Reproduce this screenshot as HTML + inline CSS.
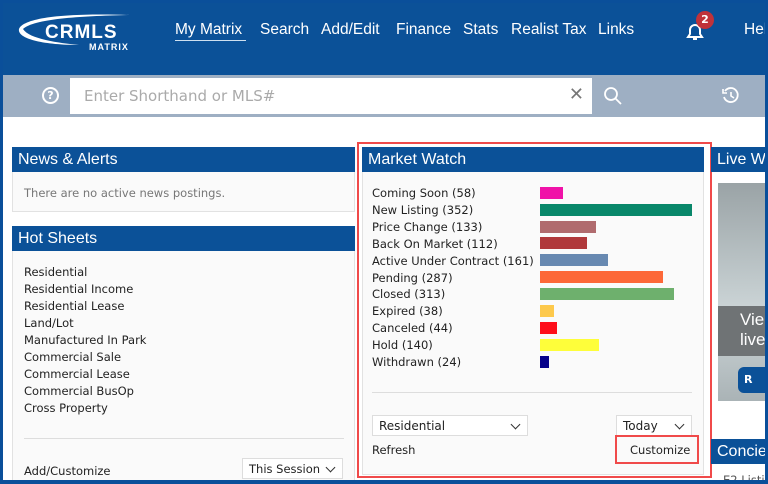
<!DOCTYPE html>
<html><head><style>
*{margin:0;padding:0;box-sizing:border-box}
body{width:768px;height:484px;overflow:hidden;background:#0a4f9a;position:relative;font-family:"DejaVu Sans",Verdana,sans-serif}
.frame{position:absolute;left:3px;top:3px;right:3px;bottom:4px;background:#fff;overflow:hidden}
.hdr{position:absolute;left:0;top:0;width:765px;height:72px;background:#0b5198}
.nav{position:absolute;top:18px;font-family:"Liberation Sans",sans-serif;font-size:15.5px;color:#fff}
.sb{position:absolute;left:0;top:72px;width:765px;height:42px;background:#9eafc3}
.inp{position:absolute;left:67px;top:3px;width:522px;height:36px;background:#fff;font-family:"DejaVu Sans",sans-serif;font-size:15px;color:#aaa;padding:9px 14px}
.ph{position:absolute;background:#0b5198;color:#fff;font-family:"Liberation Sans",sans-serif;font-size:16px;height:25px;line-height:25px;padding-left:6px}
.pb{position:absolute;background:#fafafa;border:1px solid #e2e2e2;border-top:none}
.t{font-size:11.5px;color:#222;position:absolute;white-space:nowrap}
.bar{position:absolute;height:12px;left:537px}
.sel{position:absolute;background:#fff;border:1px solid #ddd;font-size:12px;color:#222;padding:3px 6px;height:21px}
.sel:after{content:"";position:absolute;right:8px;top:5px;width:6px;height:6px;border-right:1.5px solid #333;border-bottom:1.5px solid #333;transform:rotate(45deg)}
</style></head><body>
<div class="frame">
<div class="hdr">
<svg style="position:absolute;left:6px;top:8px" width="135" height="40" viewBox="0 0 135 40">
<path d="M10 18 C15 6 60 2 120 4 C70 5 25 8 14 18 C20 28 50 32 70 34 C35 34 8 28 10 18Z" fill="#fff"/>
<text x="36" y="27" font-family="Liberation Sans" font-weight="bold" font-size="19" fill="#fff" letter-spacing="1">CRMLS</text>
<text x="80" y="39" font-family="Liberation Sans" font-weight="bold" font-size="9" fill="#fff" letter-spacing="1">MATRIX</text>
</svg>
<div class="nav" style="left:172px">My Matrix</div>
<div style="position:absolute;left:172px;top:37px;width:71px;height:1px;background:#cfe0f0"></div>
<div class="nav" style="left:257px">Search</div>
<div class="nav" style="left:318px">Add/Edit</div>
<div class="nav" style="left:393px">Finance</div>
<div class="nav" style="left:460px">Stats</div>
<div class="nav" style="left:508px">Realist Tax</div>
<div class="nav" style="left:595px">Links</div>
<svg style="position:absolute;left:681px;top:18px" width="22" height="22" viewBox="0 0 22 22"><path d="M4 16 L6 13 V9 A5 5 0 0 1 16 9 V13 L18 16 Z M9 18 h4" fill="none" stroke="#fff" stroke-width="2"/></svg>
<div style="position:absolute;left:693px;top:8px;width:18px;height:18px;border-radius:50%;background:#c0323a;color:#fff;font-size:11px;font-weight:bold;text-align:center;line-height:18px">2</div>
<div class="nav" style="left:741px">Hel</div>
</div>
<div class="sb">
<div style="position:absolute;left:39px;top:12px;width:17px;height:17px;border:2px solid #fff;border-radius:50%;color:#fff;font-size:11px;font-weight:bold;text-align:center;line-height:13px">?</div>
<div class="inp">Enter Shorthand or MLS#<span style="position:absolute;right:8px;top:6px;color:#777;font-size:18px">✕</span></div>
<svg style="position:absolute;left:600px;top:11px" width="20" height="20"><circle cx="8" cy="8" r="6" fill="none" stroke="#fff" stroke-width="1.8"/><path d="M12.5 12.5 L18 18" stroke="#fff" stroke-width="1.8"/></svg>
<svg style="position:absolute;left:718px;top:11px" width="20" height="20"><path d="M4 5 A7 7 0 1 1 3 11" fill="none" stroke="#fff" stroke-width="1.8"/><path d="M2 3 V7 H6" fill="none" stroke="#fff" stroke-width="1.6"/><path d="M10 6 V10 L13 12" fill="none" stroke="#fff" stroke-width="1.6"/></svg>
</div>

<div class="ph" style="left:9px;top:144px;width:343px">News &amp; Alerts</div>
<div class="pb" style="left:9px;top:169px;width:343px;height:40px"><div class="t" style="left:11px;top:14px;color:#777">There are no active news postings.</div></div>
<div class="ph" style="left:9px;top:223px;width:343px">Hot Sheets</div>
<div class="pb" style="left:9px;top:248px;width:343px;height:240px">
<div class="t" style="left:11px;top:13px;line-height:17px">Residential<br>Residential Income<br>Residential Lease<br>Land/Lot<br>Manufactured In Park<br>Commercial Sale<br>Commercial Lease<br>Commercial BusOp<br>Cross Property</div>
<div style="position:absolute;left:11px;top:187px;width:320px;height:1px;background:#ddd"></div>
<div class="t" style="left:11px;top:213px">Add/Customize</div>
<div class="sel" style="left:229px;top:207px;width:101px;font-size:11.5px">This Session</div>
</div>

<div class="ph" style="left:359px;top:144px;width:342px">Market Watch</div>
<div class="pb" style="left:359px;top:169px;width:342px;height:303px"></div>
<div class="t" style="left:369px;top:182px;line-height:16.9px">Coming Soon (58)<br>New Listing (352)<br>Price Change (133)<br>Back On Market (112)<br>Active Under Contract (161)<br>Pending (287)<br>Closed (313)<br>Expired (38)<br>Canceled (44)<br>Hold (140)<br>Withdrawn (24)</div>
<div class="bar" style="top:184px;width:23px;background:#f012a8"></div>
<div class="bar" style="top:201px;width:152px;background:#09876a"></div>
<div class="bar" style="top:218px;width:56px;background:#b06b6e"></div>
<div class="bar" style="top:234px;width:47px;background:#b0383b"></div>
<div class="bar" style="top:251px;width:68px;background:#6889b1"></div>
<div class="bar" style="top:268px;width:123px;background:#fd6838"></div>
<div class="bar" style="top:285px;width:134px;background:#6eb06d"></div>
<div class="bar" style="top:302px;width:14px;background:#fdc94c"></div>
<div class="bar" style="top:319px;width:17px;background:#fe0e1a"></div>
<div class="bar" style="top:336px;width:59px;background:#fefe3a"></div>
<div class="bar" style="top:353px;width:9px;background:#05018a"></div>
<div style="position:absolute;left:369px;top:389px;width:320px;height:1px;background:#ddd"></div>
<div class="sel" style="left:369px;top:412px;width:156px">Residential</div>
<div class="sel" style="left:613px;top:412px;width:76px">Today</div>
<div class="t" style="left:369px;top:440px">Refresh</div>
<div style="position:absolute;left:612px;top:432px;width:84px;height:29px;border:2px solid #f04a4a"></div>
<div class="t" style="left:627px;top:440px">Customize</div>
<div style="position:absolute;left:354px;top:139px;width:355px;height:336px;border:2px solid #f04a4a"></div>

<div class="ph" style="left:708px;top:144px;width:60px">Live W</div>
<div style="position:absolute;left:715px;top:180px;width:60px;height:218px;background:linear-gradient(#9aa3a6,#cdd6d8 60%,#aab3b6)"></div>
<div style="position:absolute;left:715px;top:303px;width:60px;height:50px;background:#6f7375;color:#fff;font-family:'Liberation Sans',sans-serif;font-size:17px;padding:4px 0 0 22px;line-height:20px">Vie<br>live</div>
<div style="position:absolute;left:735px;top:364px;width:40px;height:26px;background:#0b5198;border-radius:6px;color:#fff;font-size:11px;font-weight:bold;padding:6px 0 0 6px">R</div>
<div class="ph" style="left:708px;top:436px;width:60px">Concie</div>
<div class="t" style="left:720px;top:470px;color:#555">E2 Listi</div>
</div>
</body></html>
